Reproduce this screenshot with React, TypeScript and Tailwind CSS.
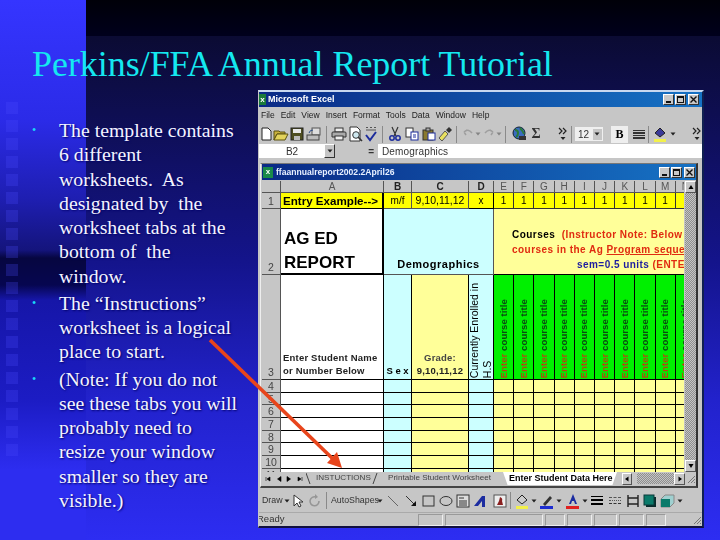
import type { ReactNode } from "react";

const bullets = [
  "The template contains\n6 different\nworksheets.  As\ndesignated by  the\nworksheet tabs at the\nbottom of  the\nwindow.",
  "The “Instructions”\nworksheet is a logical\nplace to start.",
  "(Note: If you do not\nsee these tabs you will\nprobably need to\nresize your window\nsmaller so they are\nvisible.)",
];

const menus = ["File", "Edit", "View", "Insert", "Format", "Tools", "Data", "Window", "Help"];
const narrowCols = ["E", "F", "G", "H", "I", "J", "K", "L", "M", "N"];
const blankRows = ["4", "5", "6", "7", "8", "9", "10", "11"];
const squares = Array.from({ length: 20 }, (_, i) => i);
const statusPanes = ["w-[25px]", "w-[98px]", "w-[20px]", "w-[25px]", "w-[23px]", "w-[25px]", "w-[20px]"];

function Ic({ w = 16, children }: { w?: number; children: ReactNode }) {
  return (
    <svg width={w} height="16" viewBox={`0 0 ${w} 16`} className="shrink-0">
      {children}
    </svg>
  );
}

function Sep({ className = "" }: { className?: string }) {
  return <span className={`h-[17px] w-[2px] shrink-0 border-l border-[#8a8a8a] border-r-white ${className}`} />;
}

function Caret({ className = "" }: { className?: string }) {
  return (
    <svg width="6" height="4" viewBox="0 0 6 4" className={`shrink-0 ${className}`}>
      <path d="M0.5 0.5h5L3 3.5z" fill="#222" />
    </svg>
  );
}

function Chevrons() {
  return (
    <svg width="10" height="14" viewBox="0 0 10 14" className="shrink-0">
      <path d="M1 1l3 3-3 3M5 1l3 3-3 3" fill="none" stroke="#222" strokeWidth="1.2" />
      <path d="M2.5 10h5L5 13z" fill="#222" />
    </svg>
  );
}

function WinButtons({ className = "pr-[3px]" }: { className?: string }) {
  const box =
    "flex h-[11px] w-[11px] items-center justify-center border border-t-white border-l-white border-r-[#333] border-b-[#333] bg-[#c8c8c8] text-[#111]";
  return (
    <div className={`ml-auto flex gap-[1px] ${className}`}>
      <span className={`${box} items-end pb-[1px]`}>
        <span className="h-[2px] w-[5px] bg-[#111]" />
      </span>
      <span className={box}>
        <span className="h-[7px] w-[7px] border border-t-2 border-[#111]" />
      </span>
      <span className={`${box} ml-[1px]`}>
        <svg width="7" height="7" viewBox="0 0 7 7">
          <path d="M0.5 0.5l6 6M6.5 0.5l-6 6" stroke="#111" strokeWidth="1.4" />
        </svg>
      </span>
    </div>
  );
}

function HeaderCell({ children }: { children?: ReactNode }) {
  return (
    <div className="flex items-center justify-center border-r border-b border-[#555] bg-[#c6c6c6] text-[10px] leading-none text-[#555]">
      {children}
    </div>
  );
}

function RowHead({ children, bottom = false }: { children: ReactNode; bottom?: boolean }) {
  return (
    <div
      className={`flex justify-center border-r border-b border-[#555] bg-[#c6c6c6] text-[10.5px] leading-[12px] text-[#444] ${
        bottom ? "items-end pb-[1px]" : "items-center"
      }`}
    >
      {children}
    </div>
  );
}

function Sheet() {
  return (
    <div className="grid h-[291px] flex-1 grid-cols-[19px_103px_28px_57px_25px_repeat(10,20.2px)] grid-rows-[12px_16px_66px_105px_repeat(8,12.7px)] overflow-hidden bg-white font-['Liberation_Sans',sans-serif] text-black">
      {/* column headers */}
      <HeaderCell />
      <HeaderCell>A</HeaderCell>
      <HeaderCell>
        <b className="text-[#222]">B</b>
      </HeaderCell>
      <HeaderCell>
        <b className="text-[#222]">C</b>
      </HeaderCell>
      <HeaderCell>
        <b className="text-[#222]">D</b>
      </HeaderCell>
      {narrowCols.map((c) => (
        <HeaderCell key={c}>{c}</HeaderCell>
      ))}

      {/* row 1 */}
      <RowHead>1</RowHead>
      <div className="flex items-center whitespace-nowrap border-r-2 border-b border-black bg-[#ffff00] pl-[2px] text-[11.6px] font-bold">
        Entry Example--&gt;
      </div>
      <div className="flex items-center justify-center border-r border-b border-[#555] bg-[#ffff00] text-[10px]">m/f</div>
      <div className="flex items-center justify-center border-r border-b border-[#555] bg-[#ffff00] text-[10.5px]">9,10,11,12</div>
      <div className="flex items-center justify-center border-r border-b border-black bg-[#ffff00] text-[10px]">x</div>
      {narrowCols.map((c, i) => (
        <div key={c} className="flex items-center justify-center border-r border-b border-[#333] bg-[#ffff00] text-[10px]">
          {i < 9 ? "1" : ""}
        </div>
      ))}

      {/* row 2 */}
      <RowHead bottom>2</RowHead>
      <div className="flex flex-col border-r-2 border-b-2 border-black bg-white pl-[3px] pt-[18px] text-[17px] font-bold leading-[24px]">
        <span>AG ED</span>
        <span>REPORT</span>
      </div>
      <div className="col-span-3 flex items-end justify-center border-r border-b border-[#555] bg-[#ccffff] pb-[2px] text-[11px] font-bold tracking-[0.5px]">
        Demographics
      </div>
      <div className="col-span-10 flex flex-col overflow-hidden whitespace-pre border-b border-black bg-[#ffff99] pt-[18px] text-[10px] font-bold leading-[15px] tracking-[0.45px]">
        <span className="pl-[18px]">
          Courses <span className="text-[#e02b10]"> (Instructor Note: Below</span>
        </span>
        <span className="pl-[18px] text-[#e02b10]">
          courses in the Ag <span className="underline">Program seque</span>
        </span>
        <span className="pl-[83px] text-[#1c1ca0]">
          sem=0.5 units <span className="text-[#e02b10]">(ENTE</span>
        </span>
      </div>

      {/* row 3 */}
      <RowHead bottom>3</RowHead>
      <div className="flex flex-col justify-end whitespace-nowrap border-r border-b border-black bg-white pb-[2px] pl-[2px] text-[9.5px] font-bold leading-[13px] tracking-[0.2px] text-[#222]">
        <span>Enter Student Name</span>
        <span>or Number Below</span>
      </div>
      <div className="flex items-end justify-center whitespace-pre border-r border-b border-black bg-[#ccffff] pb-[2px] text-[9.5px] font-bold leading-[13px]">
        S e x
      </div>
      <div className="flex flex-col items-center justify-end border-r border-b border-black bg-[#ffff99] pb-[2px] text-[9.5px] font-bold leading-[13px] tracking-[0.2px] text-[#222]">
        <span className="text-[#444]">Grade:</span>
        <span>9,10,11,12</span>
      </div>
      <div className="flex items-end justify-center overflow-hidden border-r border-b border-black bg-[#ccffff] pb-[1px]">
        <span className="rotate-180 whitespace-pre text-left text-[10.5px] leading-[13px] [writing-mode:vertical-rl]">
          {"Currently Enrolled in\nH.S"}
        </span>
      </div>
      {narrowCols.map((c) => (
        <div key={c} className="flex items-end justify-center overflow-hidden border-r border-b border-black bg-[#00f000] pb-[1px]">
          <span className="rotate-180 whitespace-pre text-[9.5px] font-bold leading-[12px] tracking-[0.1px] text-[#0b4a12] [writing-mode:vertical-rl]">
            <span className="text-[#b04a10]">Enter</span> course title
          </span>
        </div>
      ))}

      {/* empty rows */}
      {blankRows.map((r) => (
        <div key={r} className="contents">
          <RowHead>{r}</RowHead>
          <div className="border-r border-b border-black bg-white" />
          <div className="border-r border-b border-black bg-[#ccffff]" />
          <div className="border-r border-b border-black bg-[#ffff99]" />
          <div className="border-r border-b border-black bg-[#ccffff]" />
          {narrowCols.map((c) => (
            <div key={c} className="border-r border-b border-black bg-[#ffff99]" />
          ))}
        </div>
      ))}
    </div>
  );
}

function ArrowBtn({ d, className = "" }: { d: string; className?: string }) {
  return (
    <span
      className={`flex items-center justify-center border border-t-white border-l-white border-r-[#555] border-b-[#555] bg-[#c6c6c6] ${className}`}
    >
      <svg width="6" height="6" viewBox="0 0 6 6">
        <path d={d} fill="#000" />
      </svg>
    </span>
  );
}

const checker =
  "bg-[repeating-conic-gradient(#8e8e8e_0_25%,#c4c4c4_0_50%)] bg-[length:2px_2px]";

function Grip() {
  return (
    <svg width="10" height="10" viewBox="0 0 10 10" className="shrink-0">
      <path d="M9 2L2 9M9 5L5 9M9 8L8 9" stroke="#777" />
    </svg>
  );
}

function Tabs() {
  return (
    <div className="flex h-[13px] items-center bg-[#c6c6c6] font-['Liberation_Sans',sans-serif] text-[8.1px] leading-none text-[#444]">
      <div className="flex w-[44px] shrink-0 items-center justify-around px-[1px] text-black">
        {["M1 1v4M5 1v4L2 3z", "M5 0.5v5L1.5 3z", "M1 0.5v5L4.5 3z", "M5 1v4M1 1v4l3-2z"].map((d) => (
          <svg key={d} width="6" height="6" viewBox="0 0 6 6">
            <path d={d} fill="#000" stroke="#000" strokeWidth="0.6" />
          </svg>
        ))}
      </div>
      <svg width="5" height="13" viewBox="0 0 5 13" className="shrink-0">
        <path d="M0 1l4 11" stroke="#444" />
      </svg>
      <span className="ml-[5px] w-[52px] shrink-0">INSTUCTIONS</span>
      <svg width="6" height="13" viewBox="0 0 6 13" className="ml-[4px] shrink-0">
        <path d="M5 1L1 12" stroke="#444" />
      </svg>
      <span className="ml-[10px] w-[103px] shrink-0 whitespace-nowrap">Printable Student Worksheet</span>
      <span className="ml-[12px] flex h-[13px] w-[114px] shrink-0 items-center whitespace-nowrap bg-white pl-[6px] text-[9px] font-bold text-black [clip-path:polygon(0_0,100%_0,96%_100%,4%_100%)]">
        Enter Student Data Here
      </span>
      <ArrowBtn d="M4.5 0.5v5L1 3z" className="ml-[5px] h-[12px] w-[10px] shrink-0" />
      <span className={`ml-[5px] h-[11px] w-[37px] shrink-0 ${checker}`} />
      <ArrowBtn d="M1.5 0.5v5L5 3z" className="h-[12px] w-[11px] shrink-0" />
      <span className="flex w-[11px] shrink-0 justify-end">
        <Grip />
      </span>
    </div>
  );
}

function StandardTools() {
  return (
    <div className="flex h-[20px] items-center overflow-hidden">
      <span className="flex w-[14px] justify-center">
        <Ic w={14}>
          <path d="M3 2h6l3 3v9H3z" fill="#fff" stroke="#222" />
        </Ic>
      </span>
      <span className="flex w-[17px] justify-center">
        <Ic>
          <path d="M1 5h5l1 1h5v2H4l-3 6z" fill="#c9b13c" stroke="#5a5010" />
          <path d="M4 8h11l-3 6H1z" fill="#e3d35a" stroke="#5a5010" />
        </Ic>
      </span>
      <span className="flex w-[17px] justify-center">
        <Ic>
          <rect x="2" y="2" width="12" height="12" fill="#4e4e20" stroke="#222" />
          <rect x="4" y="3" width="8" height="4" fill="#e8e8e8" />
          <rect x="5" y="10" width="6" height="4" fill="#bbb" />
        </Ic>
      </span>
      <span className="flex w-[18px] justify-center">
        <Ic>
          <rect x="6" y="2" width="8" height="7" fill="#ddd" stroke="#555" />
          <rect x="1" y="9" width="12" height="5" fill="#bbb" stroke="#444" />
          <path d="M3 7a4 4 0 0 1 4-3" stroke="#2a4a88" fill="none" />
        </Ic>
      </span>
      <Sep className="mx-[3px]" />
      <span className="flex w-[17px] justify-center">
        <Ic>
          <rect x="4" y="2" width="8" height="4" fill="#eee" stroke="#333" />
          <path d="M1 7q0-1 1-1h12q1 0 1 1v4H1z" fill="#aaa" stroke="#333" />
          <rect x="4" y="10" width="8" height="4" fill="#eee" stroke="#333" />
        </Ic>
      </span>
      <span className="flex w-[17px] justify-center">
        <Ic>
          <path d="M3 1h7l3 3v11H3z" fill="#fff" stroke="#333" />
          <circle cx="9" cy="9" r="3.3" fill="#cfe8ef" stroke="#333" />
          <path d="M11 11l4 4" stroke="#333" strokeWidth="1.6" />
        </Ic>
      </span>
      <span className="flex w-[17px] justify-center">
        <Ic>
          <path d="M3 1.5h2M7 1.5h2M11 1.5h2M3 4h10" stroke="#555" />
          <path d="M3 9l4 5 6-8" fill="none" stroke="#1c2c9c" strokeWidth="2" />
        </Ic>
      </span>
      <Sep className="mx-[3px]" />
      <span className="flex w-[17px] justify-center">
        <Ic>
          <path d="M5 1l4 9M11 1l-4 9" stroke="#333" strokeWidth="1.2" fill="none" />
          <circle cx="5" cy="12" r="2.2" fill="none" stroke="#1c2c9c" strokeWidth="1.5" />
          <circle cx="11" cy="12" r="2.2" fill="none" stroke="#1c2c9c" strokeWidth="1.5" />
        </Ic>
      </span>
      <span className="flex w-[18px] justify-center">
        <Ic>
          <rect x="2" y="2" width="7" height="9" fill="#fff" stroke="#333" />
          <rect x="7" y="6" width="7" height="8" fill="#fff" stroke="#1c2c9c" />
          <path d="M9 9h3M9 11h3" stroke="#1c2c9c" />
        </Ic>
      </span>
      <span className="flex w-[17px] justify-center">
        <Ic>
          <rect x="2" y="4" width="10" height="10" fill="#8a7a30" stroke="#333" />
          <rect x="5" y="2" width="4" height="3" fill="#aaa" stroke="#333" />
          <rect x="7" y="7" width="7" height="7" fill="#fff" stroke="#1c2c9c" />
        </Ic>
      </span>
      <span className="flex w-[17px] justify-center">
        <Ic>
          <path d="M2 12l6-7 3 3-6 7z" fill="#e8e060" stroke="#555" />
          <path d="M9 4l3-3 3 3-3 3z" fill="#333" />
        </Ic>
      </span>
      <Sep className="mx-[3px]" />
      <span className="flex w-[14px] justify-center opacity-30">
        <Ic w={12}>
          <path d="M2 6q4-4 8 1M2 6l3-2M2 6l2 3" stroke="#444" fill="none" strokeWidth="1.5" />
        </Ic>
      </span>
      <span className="flex w-[8px] justify-center opacity-40">
        <Caret />
      </span>
      <span className="flex w-[14px] justify-center opacity-30">
        <Ic w={12}>
          <path d="M10 6q-4-4-8 1M10 6l-3-2M10 6l-2 3" stroke="#444" fill="none" strokeWidth="1.5" />
        </Ic>
      </span>
      <span className="flex w-[8px] justify-center opacity-40">
        <Caret />
      </span>
      <Sep className="mx-[2px]" />
      <span className="flex w-[20px] justify-center">
        <Ic>
          <circle cx="8" cy="7" r="6" fill="#3a6cc0" stroke="#123" />
          <path d="M4 4q3 0 3 3t-2 4M9 2q3 3 4 6" stroke="#2a7a3a" strokeWidth="2" fill="none" />
          <rect x="8" y="10" width="7" height="4" fill="#333" />
        </Ic>
      </span>
      <span className="w-[16px] text-center font-['Liberation_Serif',serif] text-[14px] font-bold leading-none text-[#333]">Σ</span>
      <span className="w-[15px]" />
      <Chevrons />
      <Sep className="ml-[3px] mr-[2px]" />
      <span className="flex h-[14px] w-[28px] shrink-0 items-center justify-between bg-[#efefef] pl-[3px] pr-[1px] font-['Liberation_Sans',sans-serif] text-[10px] text-[#333]">
        12
        <span className="flex h-[11px] w-[9px] items-center justify-center bg-[#c6c6c6]">
          <Caret />
        </span>
      </span>
      <span className="ml-[8px] flex h-[17px] w-[17px] shrink-0 items-center justify-center bg-[#eee] font-['Liberation_Serif',serif] text-[12px] font-black leading-none text-black">
        B
      </span>
      <span className="ml-[5px] flex w-[14px] shrink-0 flex-col gap-[1px]">
        <span className="h-[1.5px] w-[12px] bg-[#333]" />
        <span className="h-[1.5px] w-[12px] bg-[#333]" />
        <span className="h-[1.5px] w-[12px] bg-[#333]" />
        <span className="h-[1.5px] w-[12px] bg-[#333]" />
      </span>
      <Sep className="ml-[1px] mr-[2px]" />
      <span className="flex w-[16px] justify-center">
        <Ic>
          <path d="M3 7l5-5 5 5-5 4z" fill="#3a3a9a" stroke="#222" />
          <rect x="2" y="13" width="12" height="3" fill="#f2f04a" />
        </Ic>
      </span>
      <Caret className="ml-[2px]" />
      <span className="w-[16px] shrink-0" />
      <Chevrons />
    </div>
  );
}

function DrawingTools() {
  return (
    <div className="flex h-[24px] items-center overflow-hidden bg-[#c6c6c6] pl-[3px] pt-[1px] font-['Liberation_Sans',sans-serif] text-[8.8px] text-[#333]">
      <span className="w-[21px] shrink-0">Draw</span>
      <Caret className="ml-[1px]" />
      <span className="flex w-[16px] justify-center">
        <Ic>
          <path d="M4 2v11l3-3 2 4 2-1-2-4h4z" fill="#fff" stroke="#333" />
        </Ic>
      </span>
      <span className="ml-[1px] flex w-[16px] justify-center opacity-60">
        <Ic>
          <path d="M12 8a4.5 4.5 0 1 1-3-4" fill="none" stroke="#777" strokeWidth="1.6" />
          <path d="M8 1l3 3-3 2z" fill="#777" />
        </Ic>
      </span>
      <Sep className="mx-[3px]" />
      <span className="w-[45px] shrink-0 whitespace-nowrap">AutoShapes</span>
      <Caret className="ml-[1px]" />
      <span className="ml-[1px] flex w-[18px] justify-center">
        <Ic>
          <path d="M3 3l10 10" stroke="#666" />
        </Ic>
      </span>
      <span className="flex w-[18px] justify-center">
        <Ic>
          <path d="M3 3l8 8" stroke="#333" />
          <path d="M8 13l5 0 0-5z" fill="#111" />
        </Ic>
      </span>
      <span className="flex w-[17px] justify-center">
        <Ic>
          <rect x="2" y="3" width="11" height="10" fill="none" stroke="#333" />
        </Ic>
      </span>
      <span className="flex w-[17px] justify-center">
        <Ic>
          <ellipse cx="8" cy="8" rx="6" ry="4.5" fill="none" stroke="#333" />
        </Ic>
      </span>
      <span className="flex w-[17px] justify-center">
        <Ic>
          <rect x="2" y="2" width="12" height="12" fill="#ddd" stroke="#333" />
          <path d="M4 5h5M4 8h8M4 10h8M4 12h8" stroke="#333" />
        </Ic>
      </span>
      <span className="flex w-[17px] justify-center">
        <Ic>
          <path d="M2 13L10 3h3v11h-3V8l-4 5z" fill="#1c2ca0" />
        </Ic>
      </span>
      <span className="ml-[4px] flex w-[16px] justify-center">
        <Ic>
          <rect x="2" y="2" width="12" height="12" fill="#eee" stroke="#555" />
          <path d="M8 4q3 1 2 4l1 4H5l2-4z" fill="#8a2020" />
        </Ic>
      </span>
      <Sep className="mx-[2px]" />
      <span className="flex w-[16px] justify-center">
        <Ic>
          <path d="M3 7l5-5 5 5-5 4z" fill="#ccc" stroke="#222" />
          <rect x="2" y="13" width="12" height="3" fill="#f2f04a" />
        </Ic>
      </span>
      <Caret className="ml-[1px]" />
      <span className="ml-[2px] flex w-[16px] justify-center">
        <Ic>
          <path d="M4 11l7-8 2 2-7 8z" fill="#333" />
          <rect x="1" y="13" width="13" height="3" fill="#1c2cd0" />
        </Ic>
      </span>
      <Caret className="ml-[1px]" />
      <span className="ml-[3px] flex w-[16px] justify-center">
        <Ic>
          <path d="M8 1l4 10h-2l-1-3H7l-1 3H4z" fill="#1c2ca0" />
          <rect x="1" y="13" width="13" height="3" fill="#e02020" />
        </Ic>
      </span>
      <Caret className="ml-[1px]" />
      <span className="ml-[1px] flex w-[16px] flex-col items-center gap-[2px]">
        <span className="h-[1px] w-[12px] bg-black" />
        <span className="h-[2px] w-[12px] bg-black" />
        <span className="h-[2px] w-[12px] bg-black" />
      </span>
      <span className="ml-[2px] flex w-[16px] flex-col items-center gap-[2px]">
        <span className="h-[1px] w-[12px] border-t border-dashed border-[#555]" />
        <span className="h-[1px] w-[12px] border-t border-dotted border-[#555]" />
        <span className="h-[1px] w-[12px] border-t border-dashed border-[#333]" />
      </span>
      <span className="ml-[2px] flex w-[16px] justify-center">
        <Ic>
          <path d="M3 5h10M3 11h10M3 2v12M13 2v12" stroke="#222" strokeWidth="1.4" />
        </Ic>
      </span>
      <span className="ml-[1px] flex w-[16px] justify-center">
        <Ic>
          <rect x="4" y="4" width="10" height="10" fill="#0a2a2a" />
          <rect x="2" y="2" width="10" height="10" fill="#0a7a6a" stroke="#0a3a3a" />
        </Ic>
      </span>
      <span className="ml-[1px] flex w-[16px] justify-center">
        <Ic>
          <path d="M2 6l4-4h9v8l-4 4H2z" fill="#9fd0d0" stroke="#888" />
          <rect x="2" y="6" width="9" height="8" fill="#0a7a6a" />
        </Ic>
      </span>
      <Caret className="ml-[2px]" />
    </div>
  );
}

function ExcelWindow() {
  return (
    <div className="flex h-[438px] w-[446px] flex-col border-t-2 border-l border-t-[#c8d8f0] border-l-[#c6c6c6] border-r-2 border-b-2 border-r-[#102050] border-b-[#101040] bg-[#c6c6c6] font-['Liberation_Sans',sans-serif] blur-[0.35px]">
      {/* app title bar */}
      <div className="flex h-[15px] items-center gap-[2px] bg-[linear-gradient(to_right,#0a2a86,#1672c4)]">
        <span className="flex h-[11px] w-[7px] items-center justify-center bg-[#1a7a3a] text-[8px] font-bold leading-none text-white">x</span>
        <span className="text-[9px] font-bold text-white">Microsoft Excel</span>
        <WinButtons />
      </div>

      {/* menu */}
      <div className="flex h-[17px] items-center gap-[6px] px-[2px] text-[8.5px] text-[#222]">
        {menus.map((m) => (
          <span key={m}>{m}</span>
        ))}
      </div>

      <StandardTools />

      {/* formula bar */}
      <div className="flex h-[14px] items-stretch bg-white text-[10px] text-[#333]">
        <span className="flex w-[65px] items-center justify-center pl-[1px]">B2</span>
        <span className="flex w-[11px] items-center justify-center border border-t-white border-l-white border-r-[#333] border-b-[#333] bg-[#c6c6c6]">
          <Caret />
        </span>
        <span className="flex w-[43px] items-center justify-end bg-[#c6c6c6] pr-[4px] font-bold">=</span>
        <span className="flex items-center pl-[4px] tracking-[0.15px]">Demographics</span>
      </div>

      {/* workbook window */}
      <div className="ml-[1px] mr-[4px] mt-[5px] flex h-[325px] flex-col border-t border-l border-r-2 border-b-2 border-t-[#777] border-l-[#eee] border-r-[#333] border-b-[#444] bg-[#c6c6c6] pl-[1px]">
        <div className="mb-[1px] flex h-[16px] items-center gap-[3px] bg-[linear-gradient(to_right,#0a2a86,#1672c4)] pl-[1px]">
          <span className="flex h-[11px] w-[10px] items-center justify-center bg-[#1a8a4a] text-[8px] font-bold leading-none text-white">x</span>
          <span className="text-[8.6px] font-bold text-[#e8f0ff]">ffaannualreport2002.2April26</span>
          <WinButtons className="pr-[1px]" />
        </div>
        <div className="flex">
          <Sheet />
          <div className="ml-[1px] flex h-[291px] w-[11px] shrink-0 flex-col">
            <ArrowBtn d="M3 1l2.5 4h-5z" className="h-[12px] shrink-0" />
            <span className={`flex-1 ${checker}`} />
            <ArrowBtn d="M3 5L0.5 1h5z" className="h-[12px] shrink-0" />
          </div>
        </div>
        <Tabs />
      </div>

      <DrawingTools />

      {/* status bar */}
      <div className="flex flex-1 items-center overflow-hidden border-t border-[#aaa] text-[9.5px] text-[#333]">
        <span className="-ml-[2px] w-[161px] shrink-0">Ready</span>
        {statusPanes.map((w, i) => (
          <span key={i} className={`mr-[2px] h-[12px] shrink-0 border border-t-[#999] border-l-[#999] border-r-[#eee] border-b-[#eee] ${w}`} />
        ))}
        <span className="ml-auto">
          <Grip />
        </span>
      </div>
    </div>
  );
}

export default function App() {
  return (
    <div className="relative flex h-[540px] w-[720px] flex-col overflow-hidden bg-[linear-gradient(to_bottom,#000008_0,#00001c_36px,#0b0b33_36px,#14148c_263px,#2222cc_400px,#2d2df2_540px)] font-['Liberation_Serif',serif]">
      {/* left strip with its column of squares */}
      <div className="absolute inset-y-0 left-0 flex w-[86px] flex-col gap-[6px] bg-[linear-gradient(to_bottom,#3535ff_0,#2b2be8_120px,#1e1eb0_200px,#14147c_250px,#060640_258px,#060650_285px,#1616a8_300px,#1c1cc4_400px,#2d2df0_470px)] pl-[6px] pt-[102px]">
        {squares.map((i) => (
          <span key={i} className="h-[12px] w-[12px] shrink-0 bg-[#4a4aff]/25" />
        ))}
      </div>

      <div className="relative flex h-[90px] items-end pb-[4px] pl-[32px]">
        <h1 className="whitespace-nowrap text-[35.9px] font-normal leading-[44px] text-[#14e8f0]">Perkins/FFA Annual Report Tutorial</h1>
      </div>

      <div className="relative flex">
        <ul className="flex w-[258px] shrink-0 flex-col gap-[3px] pt-[28px]">
          {bullets.map((b) => (
            <li key={b} className="flex">
              <span className="w-[59px] shrink-0 pl-[32px] text-[12px] leading-[24.3px] text-[#19d8f8]">•</span>
              <p className="whitespace-pre text-[19.8px] leading-[24.25px] text-[#f4f4ff] [text-shadow:1px_1px_2px_#00006a]">{b}</p>
            </li>
          ))}
        </ul>
        <ExcelWindow />
      </div>

      {/* arrow lying over the text and the sheet */}
      <svg width="720" height="540" viewBox="0 0 720 540" className="pointer-events-none absolute left-0 top-0">
        <path d="M210 340L333 459" stroke="#e8451c" strokeWidth="3.6" />
        <path d="M342 468L327 463L337 452z" fill="#e8451c" />
      </svg>
    </div>
  );
}
